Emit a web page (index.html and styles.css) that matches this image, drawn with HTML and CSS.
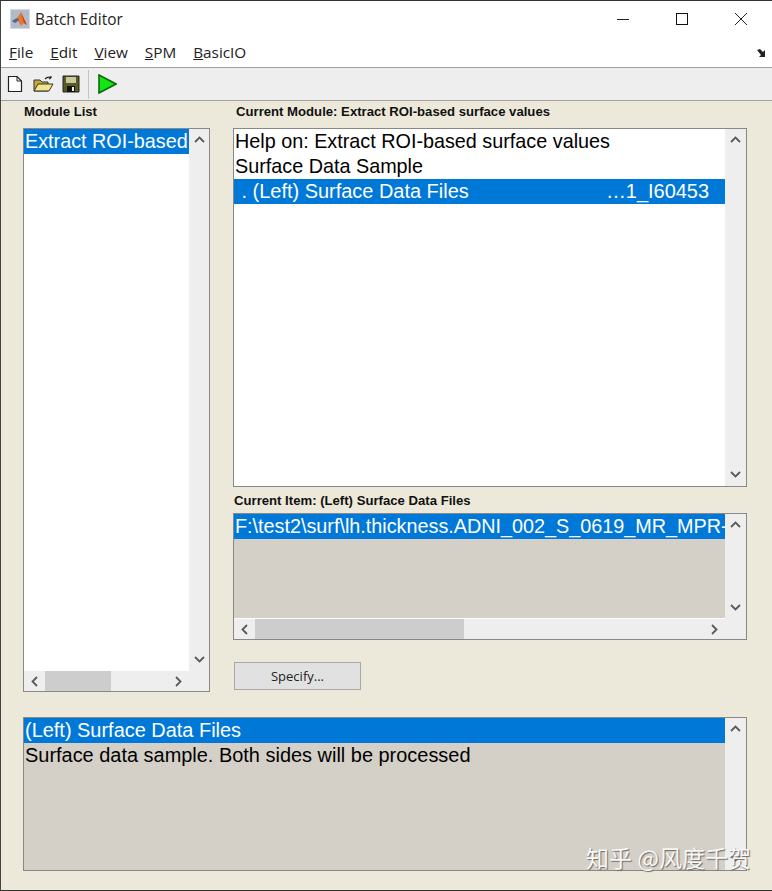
FILE: index.html
```html
<!DOCTYPE html>
<html lang="en">
<head>
<meta charset="utf-8">
<title>Batch Editor</title>
<link rel="stylesheet" href="styles.css">
</head>
<body>
<div class="window">
  <header class="titlebar">
    <svg class="app-icon" width="20" height="20" viewBox="0 0 20 20">
      <rect x="0" y="0" width="20" height="20" fill="#d5d8de"/>
      <rect x="1" y="1" width="18" height="18" fill="#b4bbc8"/>
      <path d="M2 12 L7 9 L11 3 L17 16 L14 14 L11 17 L8 12 L5 14 Z" fill="#e8782f"/>
      <path d="M2 12 L7 9 L9 11 L5 14 Z" fill="#3f6d9e"/>
      <path d="M11 3 L14 10 L17 16 L14 14 Z" fill="#b8431a"/>
    </svg>
    <span class="title">Batch Editor</span>
    <div class="win-controls">
      <svg class="win-btn" width="14" height="14" viewBox="0 0 14 14"><path d="M1 7.5H13" stroke="#222" stroke-width="1" fill="none"/></svg>
      <svg class="win-btn" width="14" height="14" viewBox="0 0 14 14"><rect x="1.5" y="1.5" width="11" height="11" stroke="#111" stroke-width="1" fill="none"/></svg>
      <svg class="win-btn" width="14" height="14" viewBox="0 0 14 14"><path d="M1 1L13 13M13 1L1 13" stroke="#222" stroke-width="1" fill="none"/></svg>
    </div>
  </header>
  <nav class="menubar">
    <span class="menu"><u>F</u>ile</span>
    <span class="menu"><u>E</u>dit</span>
    <span class="menu"><u>V</u>iew</span>
    <span class="menu"><u>S</u>PM</span>
    <span class="menu"><u>B</u>asicIO</span>
    <svg class="dock" width="10" height="9" viewBox="0 0 10 9"><path d="M0 1L3 0L6 3L8 1V8H2L4 6Z" fill="#222"/></svg>
  </nav>
  <div class="toolbar">
    <svg class="tool" width="16" height="18" viewBox="0 0 16 18"><path d="M1.5 1.5H10L14.5 6V16.5H1.5Z" fill="#fff" stroke="#222" stroke-width="1.2"/><path d="M10 1.5V6H14.5" fill="none" stroke="#222"/></svg>
    <svg class="tool tool-open" width="21" height="18" viewBox="0 0 21 18"><path d="M1 5H7L9 7H15V16H1Z" fill="#c8a838" stroke="#333"/><path d="M1 16L5 9H20L16 16Z" fill="#f2e48a" stroke="#333"/><path d="M12 4Q15 1 18 3M18 3L18 1M18 3L16 4" stroke="#222" stroke-width="1.2" fill="none"/></svg>
    <svg class="tool tool-save" width="18" height="18" viewBox="0 0 18 18"><path d="M1 1H17V17H1Z" fill="#5a5a22" stroke="#222"/><rect x="4" y="2" width="10" height="6" fill="#c9c9a0"/><rect x="5" y="11" width="8" height="6" fill="#111"/><rect x="10" y="12" width="2" height="4" fill="#eee"/></svg>
    <span class="tool-sep"></span>
    <svg class="tool tool-run" width="19" height="20" viewBox="0 0 19 20"><path d="M1 1L18 10L1 19Z" fill="#14e614" stroke="#0a6a0a" stroke-width="1.6"/></svg>
  </div>
  <main class="content">
    <div class="columns">
      <section class="col-left">
        <h2 class="label label-module">Module List</h2>
        <div class="listbox listbox-modules">
          <div class="lines">
            <div class="line selected">Extract ROI-based surface values</div>
          </div>
          <div class="vbar"><span class="arrow">
            <svg width="11" height="7" viewBox="0 0 11 7"><path d="M1 6L5.5 1.5L10 6" class="chev"/></svg></span>
            <span class="arrow"><svg width="11" height="7" viewBox="0 0 11 7"><path d="M1 1L5.5 5.5L10 1" class="chev"/></svg></span></div>
          <div class="hbar">
            <span class="arrow"><svg width="7" height="11" viewBox="0 0 7 11"><path d="M6 1L1.5 5.5L6 10" class="chev"/></svg></span>
            <span class="thumb thumb-module"></span>
            <span class="arrow arrow-end"><svg width="7" height="11" viewBox="0 0 7 11"><path d="M1 1L5.5 5.5L1 10" class="chev"/></svg></span>
          </div>
        </div>
      </section>
      <section class="col-right">
        <h2 class="label label-current">Current Module: Extract ROI-based surface values</h2>
        <div class="listbox listbox-current">
          <div class="lines">
            <div class="line">Help on: Extract ROI-based surface values</div>
            <div class="line">Surface Data Sample</div>
            <div class="line selected spread"><span>&nbsp;. (Left) Surface Data Files</span><span class="value">…1_I60453</span></div>
          </div>
          <div class="vbar"><span class="arrow">
            <svg width="11" height="7" viewBox="0 0 11 7"><path d="M1 6L5.5 1.5L10 6" class="chev"/></svg></span>
            <span class="arrow"><svg width="11" height="7" viewBox="0 0 11 7"><path d="M1 1L5.5 5.5L10 1" class="chev"/></svg></span></div>
        </div>
        <h2 class="label label-item">Current Item: (Left) Surface Data Files</h2>
        <div class="listbox listbox-item">
          <div class="lines grey">
            <div class="line selected">F:\test2\surf\lh.thickness.ADNI_002_S_0619_MR_MPR-R__GradWarp__B1_Correction</div>
          </div>
          <div class="vbar"><span class="arrow">
            <svg width="11" height="7" viewBox="0 0 11 7"><path d="M1 6L5.5 1.5L10 6" class="chev"/></svg></span>
            <span class="arrow"><svg width="11" height="7" viewBox="0 0 11 7"><path d="M1 1L5.5 5.5L10 1" class="chev"/></svg></span></div>
          <div class="hbar">
            <span class="arrow"><svg width="7" height="11" viewBox="0 0 7 11"><path d="M6 1L1.5 5.5L6 10" class="chev"/></svg></span>
            <span class="thumb thumb-item"></span>
            <span class="arrow arrow-end"><svg width="7" height="11" viewBox="0 0 7 11"><path d="M1 1L5.5 5.5L1 10" class="chev"/></svg></span>
          </div>
        </div>
        <button class="specify" type="button">Specify...</button>
      </section>
    </div>
    <div class="listbox listbox-help">
      <div class="lines grey">
        <div class="line selected">(Left) Surface Data Files</div>
        <div class="line">Surface data sample. Both sides will be processed</div>
      </div>
      <div class="vbar"><span class="arrow">
        <svg width="11" height="7" viewBox="0 0 11 7"><path d="M1 6L5.5 1.5L10 6" class="chev"/></svg></span>
        <span class="arrow"><svg width="11" height="7" viewBox="0 0 11 7"><path d="M1 1L5.5 5.5L10 1" class="chev"/></svg></span></div>
    </div>
  </main>
  <div class="watermark">知乎 @风度千贺</div>
</div>
</body>
</html>
```
FILE: styles.css
```css
* { box-sizing: border-box; }
html, body { margin: 0; padding: 0; }
body { width: 772px; height: 891px; overflow: hidden; background: #ece9da; }
.window {
  position: relative;
  width: 772px;
  height: 891px;
  display: flex;
  flex-direction: column;
  border-top: 1px solid #333;
  border-left: 1px solid #444;
  border-bottom: 1px solid #333;
  font-family: "Liberation Sans", Arial, sans-serif;
  color: #000;
}
.titlebar {
  height: 38px;
  background: #fff;
  display: flex;
  align-items: center;
  padding: 0 0 2px 9px;
  flex: none;
}
.app-icon { flex: none; }
.title {
  margin-left: 5px;
  font-family: "Open Sans", sans-serif;
  font-size: 15.4px;
  color: #222;
}
.win-controls {
  margin-left: auto;
  display: flex;
  gap: 45px;
  padding-right: 24px;
}
.menubar {
  height: 29px;
  background: #fff;
  flex: none;
  display: flex;
  align-items: center;
  gap: 17px;
  padding: 0 0 2px 8px;
  font-family: "Open Sans", sans-serif;
  font-size: 15.3px;
  color: #222;
  border-bottom: 1px solid #a0a0a0;
  position: relative;
}
.dock { position: absolute; right: 5px; top: 10px; }
.toolbar {
  height: 33px;
  flex: none;
  background: #eeeeee;
  border-bottom: 1px solid #a0a0a0;
  display: flex;
  align-items: center;
  padding-left: 6px;
}
.tool { flex: none; }
.tool-open { margin-left: 10px; }
.tool-save { margin-left: 8px; }
.tool-sep { width: 1px; height: 29px; background: #c4c4c4; margin: 0 9px 0 8px; }
.content {
  flex: 1;
  background: #ece9da;
  padding: 3px 25px 0 22px;
  display: flex;
  flex-direction: column;
}
.columns { display: flex; gap: 23px; height: 591px; flex: none; }
.col-left { width: 187px; display: flex; flex-direction: column; flex: none; }
.col-right { flex: 1; display: flex; flex-direction: column; }
.label {
  margin: 0;
  font-size: 13.15px;
  line-height: 15px;
  font-weight: bold;
  color: #111;
}
.label-module { padding: 0 0 9px 1px; }
.label-current { padding: 0 0 9px 3px; }
.label-item { padding: 6px 0 5px 1px; }
.listbox {
  display: grid;
  grid-template-columns: 1fr 21px;
  grid-template-rows: 1fr;
  border: 1px solid #888;
  background: #eeeeef;
  overflow: hidden;
}
.listbox:has(.hbar) { grid-template-rows: 1fr 20px; }
.listbox-modules { height: 564px; grid-template-columns: 1fr 20px; }
.listbox-current { height: 359px; }
.listbox-item { height: 127px; }
.listbox-help { height: 154px; margin-top: 22px; }
.lines {
  background: #fff;
  overflow: hidden;
  min-width: 0;
  font-size: 19.8px;
  line-height: 25px;
}
.listbox-help .lines { font-size: 19.95px; }
.lines.grey { background: #d4d0c8; }
.listbox-item .lines.grey { border-bottom: 1px solid #fff; }
.line { height: 25px; white-space: nowrap; overflow: hidden; padding-left: 1px; }
.selected { background: #0078d7; color: #fff; }
.spread { display: flex; justify-content: space-between; padding: 0 16px 0 2px; font-size: 19.95px; }
.vbar {
  grid-column: 2;
  grid-row: 1;
  display: flex;
  flex-direction: column;
  justify-content: space-between;
  padding-bottom: 1px;
  background: #eeeeef;
}
.vbar .arrow { padding-right: 1px; }
.hbar {
  grid-column: 1 / span 2;
  grid-row: 2;
  display: flex;
  align-items: stretch;
  background: #eeeeef;
}
.arrow {
  flex: none;
  height: 21px;
  width: 21px;
  display: flex;
  align-items: center;
  justify-content: center;
}
.arrow-end { margin-left: auto; }
.hbar .arrow { height: 20px; }
.chev { fill: none; stroke: #5a5a5a; stroke-width: 1.8; }
.thumb { background: #cdcdcd; height: 20px; }
.thumb-module { width: 66px; }
.thumb-item { width: 209px; }
.hbar .arrow-end { margin-right: 21px; }
.listbox-modules .hbar .arrow-end { margin-right: 20px; }
.specify {
  align-self: flex-start;
  margin: 22px 0 0 1px;
  width: 127px;
  height: 28px;
  border: 1px solid #a9a9a4;
  background: #e1e1e1;
  font-family: "Open Sans", sans-serif;
  font-size: 13px;
  color: #222;
  padding: 0;
}
.watermark {
  position: absolute;
  left: 585px;
  top: 841px;
  font-family: "Noto Sans CJK SC", sans-serif;
  font-size: 23px;
  line-height: 30px;
  color: #f7f7f7;
  text-shadow: 1px 1px 1px #6a6a6a;
  white-space: nowrap;
}
```
